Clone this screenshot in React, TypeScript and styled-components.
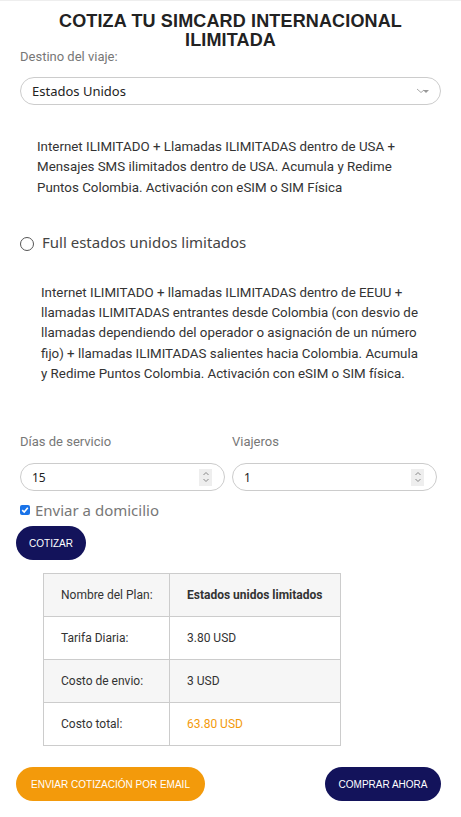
import styled, { createGlobalStyle } from "styled-components";

const GlobalStyle = createGlobalStyle`
  body {
    margin: 0;
    background: #fff;
    font-family: Roboto, "Liberation Sans", Arial, sans-serif;
  }
`;

const plans = [
  { label: "Nombre del Plan:", value: "Estados unidos limitados", bold: true },
  { label: "Tarifa Diaria:", value: "3.80 USD" },
  { label: "Costo de envio:", value: "3 USD" },
  { label: "Costo total:", value: "63.80 USD", accent: true },
];

function Spin() {
  return (
    <Spinner>
      <svg width="8" height="14" viewBox="0 0 8 14">
        <path d="M1.5 5 L4 2.5 L6.5 5 M1.5 9 L4 11.5 L6.5 9" fill="none" stroke="#888" strokeWidth="1" />
      </svg>
    </Spinner>
  );
}

export default function App() {
  return (
    <>
      <GlobalStyle />
      <Page>
        <Title>COTIZA TU SIMCARD INTERNACIONAL ILIMITADA</Title>
        <FieldLabel $top={0}>Destino del viaje:</FieldLabel>
        <SelectBox>
          <span>Estados Unidos</span>
          <svg width="14" height="8" viewBox="0 0 14 8">
            <path d="M1 2 L5 5.5 L8 3" fill="none" stroke="#aaa" strokeWidth="1" />
            <path d="M7 3 L13 3 L10 6 Z" fill="#999" />
          </svg>
        </SelectBox>

        <Description $indent={37} $top={32}>
          Internet ILIMITADO + Llamadas ILIMITADAS dentro de USA + Mensajes SMS ilimitados dentro de USA. Acumula y
          Redime Puntos Colombia. Activación con eSIM o SIM Física
        </Description>

        <RadioRow>
          <Radio />
          <RadioLabel>Full estados unidos limitados</RadioLabel>
        </RadioRow>

        <Description $indent={41} $top={31}>
          Internet ILIMITADO + llamadas ILIMITADAS dentro de EEUU + llamadas ILIMITADAS entrantes desde Colombia (con
          desvio de llamadas dependiendo del operador o asignación de un número fijo) + llamadas ILIMITADAS salientes
          hacia Colombia. Acumula y Redime Puntos Colombia. Activación con eSIM o SIM física.
        </Description>

        <FieldsRow>
          <Field>
            <FieldLabel $top={0}>Días de servicio</FieldLabel>
            <NumberBox>
              <span>15</span>
              <Spin />
            </NumberBox>
          </Field>
          <Field>
            <FieldLabel $top={0}>Viajeros</FieldLabel>
            <NumberBox>
              <span>1</span>
              <Spin />
            </NumberBox>
          </Field>
        </FieldsRow>

        <CheckRow>
          <CheckBox>
            <svg width="8" height="8" viewBox="0 0 8 8">
              <path d="M1.2 4.2 L3.2 6 L6.8 1.8" fill="none" stroke="#fff" strokeWidth="1.6" />
            </svg>
          </CheckBox>
          <CheckLabel>Enviar a domicilio</CheckLabel>
        </CheckRow>

        <PillButton $color="#13135b" $width={70} $top={6}>
          COTIZAR
        </PillButton>

        <PlanTable>
          <tbody>
            {plans.map((p, i) => (
              <Row key={p.label} $shaded={i % 2 === 0}>
                <LabelCell>{p.label}</LabelCell>
                <ValueCell $bold={p.bold} $accent={p.accent}>
                  {p.value}
                </ValueCell>
              </Row>
            ))}
          </tbody>
        </PlanTable>

        <ActionsRow>
          <PillButton $color="#f39a0b" $width={189}>ENVIAR COTIZACIÓN POR EMAIL</PillButton>
          <PillButton $color="#13135b" $width={116}>COMPRAR AHORA</PillButton>
        </ActionsRow>
      </Page>
    </>
  );
}

const Page = styled.div`
  width: 461px;
  box-sizing: border-box;
  padding: 11px 20px 16px 20px;
  border-top: 1px solid #eee;
  display: flex;
  flex-direction: column;
`;

const Title = styled.h1`
  margin: 0 auto;
  width: 370px;
  text-align: center;
  font-family: "Liberation Sans", Arial, sans-serif;
  font-weight: 700;
  font-size: 18px;
  line-height: 19px;
  letter-spacing: 0.15px;
  color: #222;
`;

const FieldLabel = styled.div<{ $top: number }>`
  font-family: Roboto, "Liberation Sans", sans-serif;
  font-size: 13px;
  color: #777;
  line-height: 13px;
  margin-top: ${({ $top }) => $top}px;
`;

const SelectBox = styled.div`
  margin-top: 14px;
  height: 28px;
  box-sizing: border-box;
  border: 1px solid #ccc;
  border-radius: 14px;
  padding: 0 10px 0 11px;
  display: flex;
  align-items: center;
  justify-content: space-between;
  font-family: "Noto Sans", "Open Sans", sans-serif;
  font-size: 13px;
  color: #222;
`;

const Description = styled.p<{ $indent: number; $top: number }>`
  margin: ${({ $top }) => $top}px 20px 0 ${({ $indent }) => $indent - 20}px;
  font-family: Roboto, "Liberation Sans", sans-serif;
  font-size: 13.33px;
  line-height: 20.3px;
  color: #333;
`;

const RadioRow = styled.div`
  margin-top: 34px;
  display: flex;
  align-items: center;
  gap: 8px;
`;

const Radio = styled.span`
  width: 12px;
  height: 12px;
  border: 1px solid #555;
  border-radius: 50%;
  margin-top: 4px;
`;

const RadioLabel = styled.span`
  font-family: "Noto Sans", "Open Sans", sans-serif;
  font-size: 15px;
  color: #444;
`;

const FieldsRow = styled.div`
  margin-top: 51px;
  display: grid;
  grid-template-columns: 205px 205px;
  column-gap: 7px;
`;

const Field = styled.div`
  display: flex;
  flex-direction: column;
`;

const NumberBox = styled(SelectBox)`
  font-size: 12px;
  margin-top: 15px;
  padding-right: 12px;
`;

const Spinner = styled.span`
  width: 13px;
  height: 17px;
  background: #eee;
  display: flex;
  align-items: center;
  justify-content: center;
`;

const CheckRow = styled.div`
  margin-top: 9px;
  display: flex;
  align-items: center;
  gap: 5px;
`;

const CheckBox = styled.span`
  width: 10px;
  height: 10px;
  border-radius: 2px;
  background: #1a73e8;
  display: flex;
  align-items: center;
  justify-content: center;
`;

const CheckLabel = styled.span`
  font-family: "Noto Sans", "Open Sans", sans-serif;
  font-size: 15px;
  color: #777;
  line-height: 20px;
`;

const PillButton = styled.button<{ $color: string; $width: number; $top?: number }>`
  width: ${({ $width }) => $width}px;
  height: 34px;
  margin: ${({ $top }) => $top ?? 0}px 0 0 -4px;
  border: none;
  border-radius: 17px;
  background: ${({ $color }) => $color};
  color: #fff;
  font-family: "Liberation Sans", Arial, sans-serif;
  font-size: 10px;
  padding: 0;
  flex-shrink: 0;
`;

const PlanTable = styled.table`
  margin: 13px 0 0 23px;
  width: 298px;
  border-collapse: collapse;
  font-family: Roboto, "Liberation Sans", sans-serif;
  font-size: 12px;
  color: #333;
`;

const Row = styled.tr<{ $shaded: boolean }>`
  height: 43px;
  background: ${({ $shaded }) => ($shaded ? "#f6f6f6" : "#fff")};
`;

const LabelCell = styled.td`
  width: 126px;
  border: 1px solid #ccc;
  padding: 0 0 0 17px;
  box-sizing: border-box;
`;

const ValueCell = styled.td<{ $bold?: boolean; $accent?: boolean }>`
  border: 1px solid #ccc;
  padding: 0 0 0 17px;
  font-weight: ${({ $bold }) => ($bold ? 700 : 400)};
  color: ${({ $accent }) => ($accent ? "#f39a0b" : "#333")};
`;

const ActionsRow = styled.div`
  margin-top: 21px;
  display: flex;
  justify-content: space-between;
`;
